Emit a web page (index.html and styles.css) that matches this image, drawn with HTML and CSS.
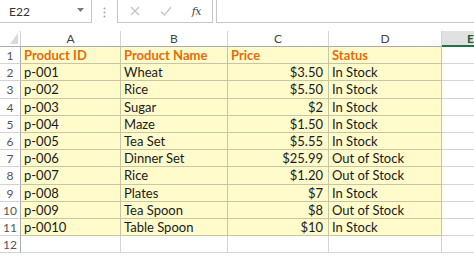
FILE: index.html
```html
<!DOCTYPE html>
<html>
<head>
<meta charset="utf-8">
<link rel="stylesheet" href="styles.css">
</head>
<body>
<div class="fbar">
  <div class="namebox"><span class="ref">E22</span><svg class="arrow" width="7" height="4" viewBox="0 0 7 4"><path d="M0 0 H7 L3.5 4 Z" fill="#7a7a7a"/></svg></div>
  <div class="grip"><svg width="3" height="11" viewBox="0 0 3 11"><circle cx="1.5" cy="1.5" r="1" fill="#a8a8a8"/><circle cx="1.5" cy="5.5" r="1" fill="#a8a8a8"/><circle cx="1.5" cy="9.5" r="1" fill="#a8a8a8"/></svg></div>
  <div class="fbtns">
    <svg width="10" height="10" viewBox="0 0 10 10"><path d="M1 1 L9 9 M9 1 L1 9" stroke="#c4c4c4" stroke-width="1.3" fill="none"/></svg>
    <svg width="12" height="10" viewBox="0 0 12 10"><path d="M1 5.5 L4.5 9 L11 1" stroke="#c4c4c4" stroke-width="1.3" fill="none"/></svg>
    <span class="fx">fx</span>
  </div>
  <div class="finput"></div>
</div>
<div class="sheet">
  <div class="corner"><svg width="8" height="11" viewBox="0 0 8 11"><path d="M8 0 V11 H0 Z" fill="#dadada"/></svg></div>
  <div class="ch">A</div><div class="ch">B</div><div class="ch">C</div><div class="ch">D</div><div class="ch sel">E</div>

  <div class="rh">1</div><div class="c y h">Product ID</div><div class="c y h">Product Name</div><div class="c y h">Price</div><div class="c y h">Status</div><div class="c"></div>
  <div class="rh">2</div><div class="c y">p-001</div><div class="c y">Wheat</div><div class="c y r">$3.50</div><div class="c y">In Stock</div><div class="c"></div>
  <div class="rh">3</div><div class="c y">p-002</div><div class="c y">Rice</div><div class="c y r">$5.50</div><div class="c y">In Stock</div><div class="c"></div>
  <div class="rh">4</div><div class="c y">p-003</div><div class="c y">Sugar</div><div class="c y r">$2</div><div class="c y">In Stock</div><div class="c"></div>
  <div class="rh">5</div><div class="c y">p-004</div><div class="c y">Maze</div><div class="c y r">$1.50</div><div class="c y">In Stock</div><div class="c"></div>
  <div class="rh">6</div><div class="c y">p-005</div><div class="c y">Tea Set</div><div class="c y r">$5.55</div><div class="c y">In Stock</div><div class="c"></div>
  <div class="rh">7</div><div class="c y">p-006</div><div class="c y">Dinner Set</div><div class="c y r">$25.99</div><div class="c y">Out of Stock</div><div class="c"></div>
  <div class="rh">8</div><div class="c y">p-007</div><div class="c y">Rice</div><div class="c y r">$1.20</div><div class="c y">Out of Stock</div><div class="c"></div>
  <div class="rh">9</div><div class="c y">p-008</div><div class="c y">Plates</div><div class="c y r">$7</div><div class="c y">In Stock</div><div class="c"></div>
  <div class="rh">10</div><div class="c y">p-009</div><div class="c y">Tea Spoon</div><div class="c y r">$8</div><div class="c y">Out of Stock</div><div class="c"></div>
  <div class="rh">11</div><div class="c y">p-0010</div><div class="c y">Table Spoon</div><div class="c y r">$10</div><div class="c y">In Stock</div><div class="c"></div>
  <div class="rh">12</div><div class="c"></div><div class="c"></div><div class="c"></div><div class="c"></div><div class="c"></div>
</div>
</body>
</html>
```

FILE: styles.css
```css
* { box-sizing: border-box; }
html, body { margin: 0; padding: 0; background: #fff; overflow: hidden; }
body { width: 474px; height: 260px; font-family: Lato, "Open Sans", sans-serif; }

.fbar { display: flex; height: 23px; }
.namebox {
  width: 92px; border-right: 1px solid #c6c6c6; border-bottom: 1px solid #c6c6c6;
  display: flex; align-items: center; justify-content: space-between;
  padding: 0 7px 0 9px; font-size: 12px; color: #333;
}
.namebox .ref { padding-top: 1px; }
.arrow { margin-top: -2px; }
.grip { width: 25px; display: flex; align-items: center; justify-content: center; padding-top: 1px; }
.fbtns {
  width: 96px; border-left: 1px solid #c6c6c6; border-right: 1px solid #c6c6c6; border-bottom: 1px solid #c6c6c6;
  display: flex; align-items: center; justify-content: space-between; padding: 0 11px 0 12px;
}
.fx { font-family: "DejaVu Serif", "Liberation Serif", serif; font-style: italic; font-size: 11px; color: #444; letter-spacing: -0.5px; }
.finput { flex: 1; margin-left: 3px; border-left: 1px solid #c6c6c6; border-bottom: 1px solid #c6c6c6; }

.sheet {
  margin-top: 8px;
  display: grid;
  grid-template-columns: 21px 100px 107px 101px 113px 1fr;
  grid-template-rows: 16px repeat(12, 17.2px);
  font-size: 13px;
}
.corner { border-right: 1px solid #d4d4d4; border-bottom: 1px solid #ababab; display: flex; align-items: flex-end; justify-content: flex-end; padding: 0 2px 2px 0; }
.ch {
  border-right: 1px solid #d4d4d4; border-bottom: 1px solid #ababab;
  text-align: center; color: #444; font-size: 12px; line-height: 15px;
}
.ch.sel { background: #e1e1e1; border-bottom: 2px solid #217346; color: #1e5c3a; font-weight: 700; text-align: left; padding-left: 25px; }
.rh {
  border-right: 1px solid #ababab; border-bottom: 1px solid #d4d4d4;
  color: #555; font-size: 12px; text-align: center; line-height: 17px;
}
.c {
  border-right: 1px solid #d4d4d4; border-bottom: 1px solid #d4d4d4;
  padding-left: 3px; color: #1a1a1a; line-height: 17px; white-space: nowrap; overflow: hidden;
}
.c.y { background: #fffbcb; border-color: #c8c5a4; }
.c.h { color: #e46c0a; font-weight: 700; }
.c.r { text-align: right; padding-right: 5px; }
```
